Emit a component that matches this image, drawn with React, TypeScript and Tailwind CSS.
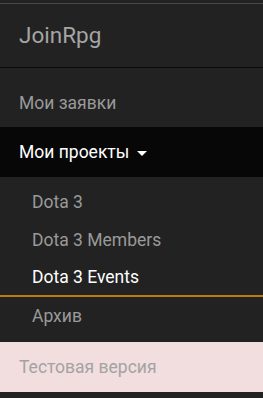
const subItems = [
  { name: 'Dota 3', active: false },
  { name: 'Dota 3 Members', active: false },
  { name: 'Dota 3 Events', active: true },
  { name: 'Архив', active: false },
];

export default function App() {
  return (
    <div className="w-[263px] h-[398px] bg-[#222] font-['Roboto',sans-serif] flex flex-col">
      <div className="h-[3px] bg-[#222]" />
      <div className="h-px bg-[#4a4a4a]" />
      {/* brand */}
      <div className="h-[63px] flex items-center pl-[19px]">
        <span className="text-[22.5px] text-[#a5a5a5]">JoinRpg</span>
      </div>
      <div className="h-px bg-[#0a0a0a]" />
      {/* nav */}
      <div className="h-[59px] flex items-center pl-[19px] pt-[12px]">
        <span className="text-[17.5px] text-[#9a9a9a]">Мои заявки</span>
      </div>
      <div className="h-[50px] bg-[#070707] flex items-center pl-[19px] gap-[8px]">
        <span className="text-[17.5px] text-white">Мои проекты</span>
        <span className="w-0 h-0 border-t-[5px] border-x-[5px] border-x-transparent border-t-white mt-[2px]" />
      </div>
      <div className="pt-[6px] pb-[7px]">
        {subItems.map((item) => (
          <div
            key={item.name}
            className={
              item.active
                ? 'h-[38px] flex items-center pl-[32px] border-b-2 border-[#b97d0a]'
                : 'h-[38px] flex items-center pl-[32px] pt-px'
            }
          >
            <span className={item.active ? 'text-[17.5px] text-white' : 'text-[17.5px] text-[#9a9a9a]'}>
              {item.name}
            </span>
          </div>
        ))}
      </div>
      <div className="h-[50px] bg-[#f2dede] flex items-center pl-[19px]">
        <span className="text-[17.5px] text-[#a3a3a3]">Тестовая версия</span>
      </div>
    </div>
  );
}
